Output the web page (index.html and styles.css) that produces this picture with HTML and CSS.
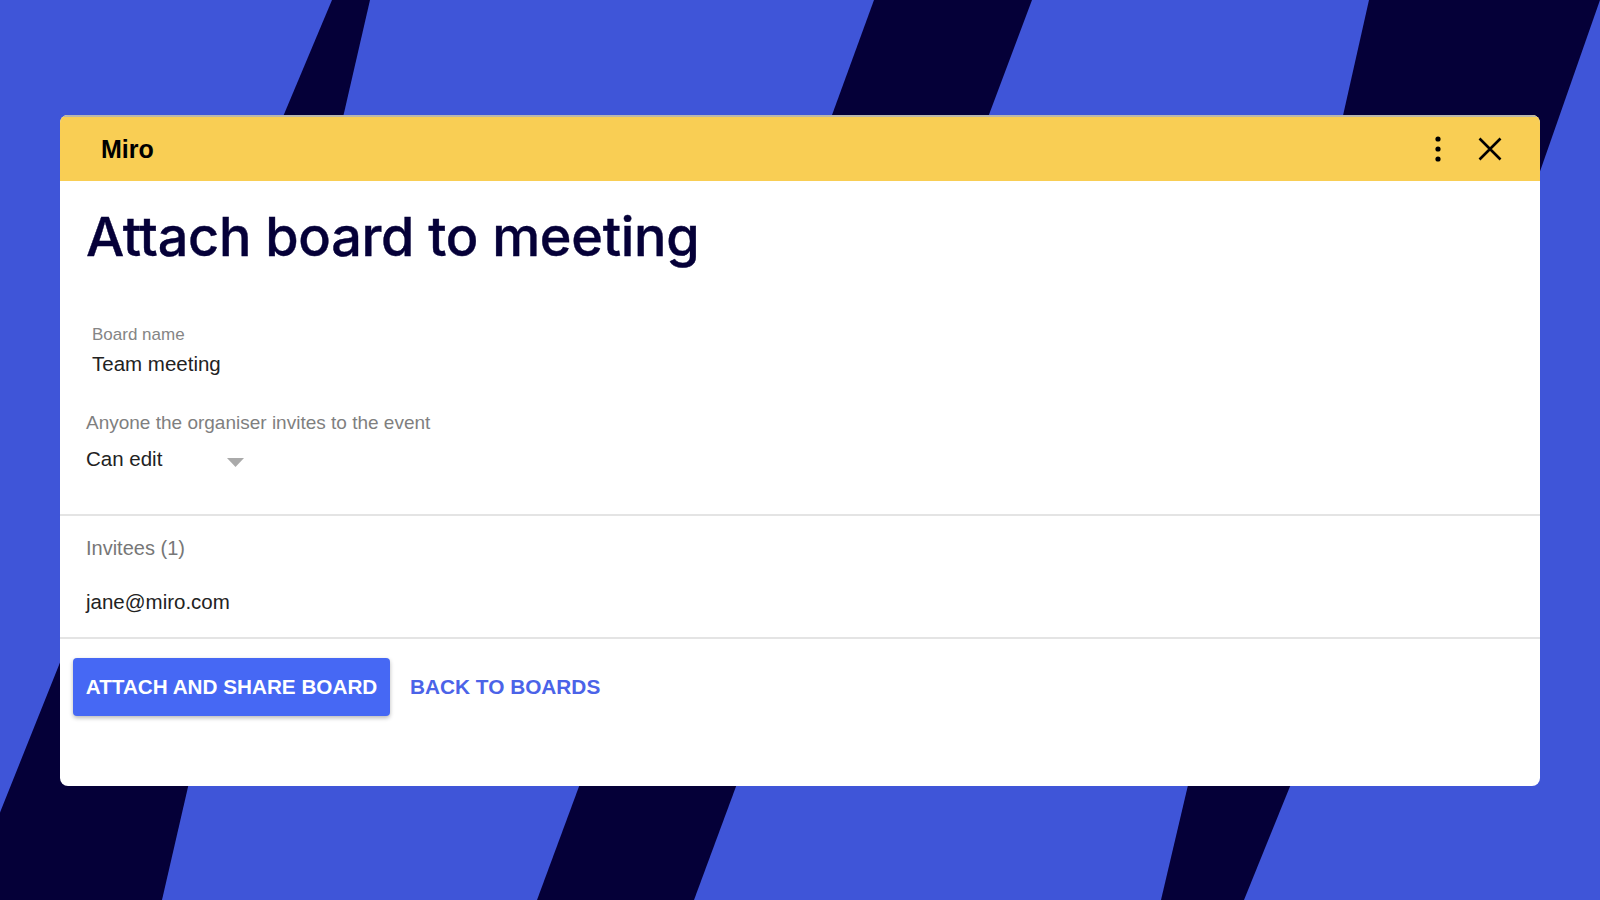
FILE: index.html
```html
<!DOCTYPE html>
<html lang="en">
<head>
<meta charset="utf-8">
<title>Miro – Attach board to meeting</title>
<link rel="stylesheet" href="styles.css">
</head>
<body>
<div class="backdrop" aria-hidden="true">
  <svg class="backdrop-svg" viewBox="0 0 1600 900" preserveAspectRatio="none">
    <rect x="0" y="0" width="1600" height="900" fill="#3f55d8"/>
    <polygon points="332,0 370,0 324,200 248,200" fill="#050038"/>
    <polygon points="874,0 1032,0 957,200 801,200" fill="#050038"/>
    <polygon points="1369,0 1600,0 1530,200 1324,200" fill="#050038"/>
    <polygon points="85,600 231,600 162,900 -35,900" fill="#050038"/>
    <polygon points="611,700 768,700 694,900 537,900" fill="#050038"/>
    <polygon points="1208,700 1325,700 1244,900 1161,900" fill="#050038"/>
  </svg>
</div>

<main class="stage">
  <section class="card">
    <header class="card-head">
      <span class="brand">Miro</span>
      <div class="head-actions">
        <button class="icon-btn kebab" aria-label="More">
          <svg width="8" height="28" viewBox="0 0 8 28"><circle cx="4" cy="4" r="2.6"/><circle cx="4" cy="14" r="2.6"/><circle cx="4" cy="24" r="2.6"/></svg>
        </button>
        <button class="icon-btn close" aria-label="Close">
          <svg width="24" height="24" viewBox="0 0 24 24"><path d="M1.5 1.5 L22.5 22.5 M22.5 1.5 L1.5 22.5"/></svg>
        </button>
      </div>
    </header>

    <div class="card-body">
      <h1 class="title">Attach board to meeting</h1>
      <div class="field">
        <div class="field-label">Board name</div>
        <div class="field-value">Team meeting</div>
      </div>
      <div class="perm">
        <div class="perm-label">Anyone the organiser invites to the event</div>
        <div class="select">
          <span class="select-value">Can edit</span>
          <svg class="caret" width="17" height="9" viewBox="0 0 17 9"><polygon points="0,0 17,0 8.5,9"/></svg>
        </div>
      </div>
    </div>

    <div class="invitees">
      <div class="invitees-title">Invitees (1)</div>
      <div class="invitee">jane@miro.com</div>
    </div>

    <div class="actions">
      <button class="btn-primary">ATTACH AND SHARE BOARD</button>
      <button class="btn-text">BACK TO BOARDS</button>
    </div>
  </section>
</main>
</body>
</html>
```

FILE: styles.css
```css
* {
  box-sizing: border-box;
}

html, body {
  margin: 0;
  padding: 0;
  width: 1600px;
  height: 900px;
  overflow: hidden;
}

body {
  position: relative;
  font-family: "Liberation Sans", Arial, sans-serif;
  background: #3f55d8;
}

.backdrop {
  position: absolute;
  inset: 0;
  z-index: 0;
}

.backdrop-svg {
  display: block;
  width: 1600px;
  height: 900px;
}

.stage {
  position: relative;
  z-index: 1;
  padding: 115px 0 0 60px;
}

.card {
  width: 1480px;
  height: 671px;
  background: #ffffff;
  border-radius: 8px;
  overflow: hidden;
  display: flex;
  flex-direction: column;
}

.card-head {
  height: 66px;
  flex: none;
  background: #f9ce54;
  border-top: 2px solid #b9b6ad;
  display: flex;
  align-items: center;
  justify-content: space-between;
  padding: 0 38px 0 41px;
}

.brand {
  font-family: "Liberation Sans", Arial, sans-serif;
  font-weight: 700;
  font-size: 25px;
  color: #000;
}

.head-actions {
  display: flex;
  align-items: center;
  gap: 36px;
}

.icon-btn {
  border: 0;
  background: none;
  padding: 0;
  margin: 0;
  display: flex;
  align-items: center;
  justify-content: center;
  cursor: pointer;
}

.icon-btn svg {
  display: block;
}

.kebab svg circle {
  fill: #000;
}

.close svg path {
  stroke: #000;
  stroke-width: 2.6;
  fill: none;
}

.card-body {
  padding: 26px 26px 0 26px;
}

.title {
  margin: 0;
  font-family: Inter, "Liberation Sans", sans-serif;
  font-weight: 500;
  font-size: 54px;
  line-height: 60px;
  color: #050038;
  letter-spacing: -0.3px;
  -webkit-text-stroke: 0.4px #050038;
}

.field {
  margin-top: 58px;
  padding-left: 6px;
}

.field-label {
  font-size: 17px;
  line-height: 20px;
  color: #858585;
}

.field-value {
  margin-top: 7px;
  font-size: 20.5px;
  line-height: 24px;
  color: #222;
}

.perm {
  margin-top: 36px;
}

.perm-label {
  font-size: 19px;
  line-height: 22px;
  color: #7f7f7f;
}

.select {
  margin-top: 13px;
  width: 160px;
  display: flex;
  align-items: center;
  justify-content: space-between;
}

.select-value {
  font-size: 20.5px;
  line-height: 24px;
  color: #222;
}

.caret {
  display: block;
  margin-top: 7px;
  margin-right: 2px;
  fill: #aaaaaa;
}

.invitees {
  margin-top: 43px;
  border-top: 2px solid #e4e4e4;
  border-bottom: 2px solid #e4e4e4;
  padding: 20px 26px 23px 26px;
}

.invitees-title {
  font-size: 20px;
  line-height: 24px;
  color: #777;
}

.invitee {
  margin-top: 30px;
  font-size: 20.5px;
  line-height: 24px;
  color: #222;
}

.actions {
  display: flex;
  align-items: center;
  gap: 20px;
  padding: 19px 0 0 13px;
}

.btn-primary {
  height: 58px;
  width: 317px;
  border: 0;
  border-radius: 4px;
  background: #4668f4;
  color: #fff;
  font-family: "Liberation Sans", Arial, sans-serif;
  font-weight: 700;
  font-size: 20.7px;
  padding: 0;
  box-shadow: 0 2px 4px rgba(0, 0, 0, 0.28);
  cursor: pointer;
}

.btn-text {
  border: 0;
  background: none;
  padding: 0;
  color: #4b63e8;
  font-family: "Liberation Sans", Arial, sans-serif;
  font-weight: 700;
  font-size: 20.8px;
  cursor: pointer;
}
```
